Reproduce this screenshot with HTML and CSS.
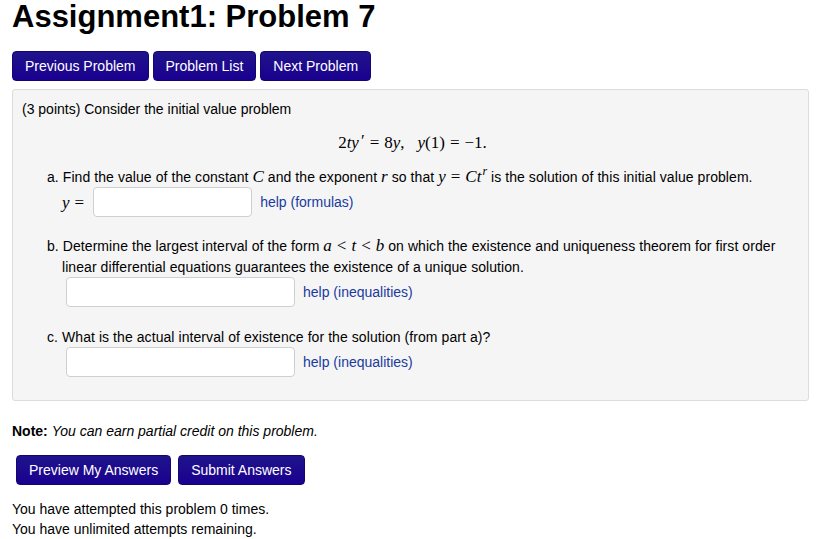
FILE: index.html
```html
<!DOCTYPE html>
<html lang="en">

<head>
    <meta charset="UTF-8">
    <title>Assignment1: Problem 7</title>
    <link rel="stylesheet" href="styles.css">
</head>

<body>
    <div class="page">
        <!-- Title -->
        <h1 class="title">Assignment1: Problem 7</h1>

        <!-- Problem navigation -->
        <div class="nav-buttons">
            <a class="btn" href="#">Previous Problem</a>
            <a class="btn" href="#">Problem List</a>
            <a class="btn" href="#">Next Problem</a>
        </div>

        <!-- Problem body -->
        <div class="problem">
            <p class="intro">(3 points) Consider the initial value problem</p>
            <div class="display-math">
                <span class="math">2<i>ty</i><span class="prime">&#8242;</span><span class="rel">=</span>8<i>y</i>,</span>
                <span class="math"><i>y</i>(1)<span class="rel">=</span>&minus;1.</span>
            </div>

            <div class="part part-a">
                <p>a. Find the value of the constant <i class="math">C</i> and the exponent <i class="math">r</i> so that <span class="math"><i>y</i><span class="rel">=</span><i>Ct<sup>r</sup></i></span> is the solution of this initial value problem.</p>
                <div class="answer-row answer-a">
                    <span class="math label"><i>y</i><span class="rel">=</span></span>
                    <input type="text" class="answer small">
                    <a class="help" href="#">help (formulas)</a>
                </div>
            </div>

            <div class="part">
                <p>b. Determine the largest interval of the form <span class="math"><i>a</i><span class="rel">&lt;</span><i>t</i><span class="rel">&lt;</span><i>b</i></span> on which the existence and uniqueness theorem for first order linear differential equations guarantees the existence of a unique solution.</p>
                <div class="answer-row">
                    <input type="text" class="answer">
                    <a class="help" href="#">help (inequalities)</a>
                </div>
            </div>

            <div class="part">
                <p>c. What is the actual interval of existence for the solution (from part a)?</p>
                <div class="answer-row">
                    <input type="text" class="answer">
                    <a class="help" href="#">help (inequalities)</a>
                </div>
            </div>
        </div>

        <!-- Note and submit -->
        <p class="note"><b>Note:</b> <i>You can earn partial credit on this problem.</i></p>
        <div class="submit-buttons">
            <a class="btn" href="#">Preview My Answers</a>
            <a class="btn" href="#">Submit Answers</a>
        </div>
        <p class="attempts">You have attempted this problem 0 times.<br>You have unlimited attempts remaining.</p>
    </div>
</body>

</html>
```

FILE: styles.css
```css
body {
    font-family: 'Liberation Sans', Arial, sans-serif;
    font-size: 14px;
    color: #000;
    background-color: #fff;
    margin: 0;
    padding: 0;
}

.page {
    padding: 0 14px 0 12px;
}

p {
    margin: 0;
    line-height: 21px;
}

/* Title */
.title {
    font-size: 31px;
    font-weight: bold;
    margin: 0;
    line-height: 34px;
}

/* Buttons */
.nav-buttons,
.submit-buttons {
    display: flex;
    gap: 4px;
}

.nav-buttons {
    margin-top: 17px;
}

.btn {
    display: inline-block;
    height: 30px;
    line-height: 29px;
    padding: 0 12px;
    color: #fff;
    font-size: 14px;
    text-decoration: none;
    background: linear-gradient(#1f148c, #1a008f);
    border: 1px solid #14066e;
    border-radius: 4px;
    box-sizing: border-box;
}

/* Problem box */
.problem {
    margin-top: 8px;
    background-color: #f5f5f5;
    border: 1px solid #dcdcdc;
    border-radius: 3px;
    padding: 9px 9px 23px 9px;
}

.display-math {
    display: flex;
    justify-content: center;
    gap: 13px;
    margin: 11px 0 12px;
    padding-left: 4px;
}

.math {
    font-family: 'Liberation Serif', 'Times New Roman', serif;
    font-size: 17px;
    line-height: 1;
    letter-spacing: 0;
}

.display-math .math {
    line-height: 24px;
}

.rel {
    font-style: normal;
    margin: 0 5px;
}

.prime {
    position: relative;
    top: -2px;
    margin-left: 2px;
}

.math sup {
    font-size: 12px;
    line-height: 0;
    margin-left: 1px;
}

/* Parts a, b, c */
.part {
    padding-left: 40px;
    margin-bottom: 20px;
}

.part-a {
    margin-bottom: 19px;
}

.part:last-child {
    margin-bottom: 0;
}

.part p {
    text-indent: -15px;
    letter-spacing: 0.07px;
}

.answer-row {
    display: flex;
    align-items: center;
    gap: 8px;
    padding-left: 4px;
    margin-top: -1px;
}

.answer-a {
    padding-left: 0;
}

.label .rel {
    margin-right: 0;
}

.answer {
    width: 229px;
    height: 30px;
    box-sizing: border-box;
    border: 1px solid #cfcfcf;
    border-radius: 4px;
    background-color: #fff;
    padding: 4px 6px;
    font-size: 14px;
}

.answer.small {
    width: 159px;
    margin-left: 1px;
}

.help {
    color: #1a3a9e;
    text-decoration: none;
    font-size: 14px;
}

/* Note and submit section */
.note {
    margin-top: 20px;
}

.submit-buttons {
    margin-top: 13px;
    padding-left: 4px;
    gap: 7px;
}

.attempts {
    margin-top: 14px;
    line-height: 20px;
}
```
